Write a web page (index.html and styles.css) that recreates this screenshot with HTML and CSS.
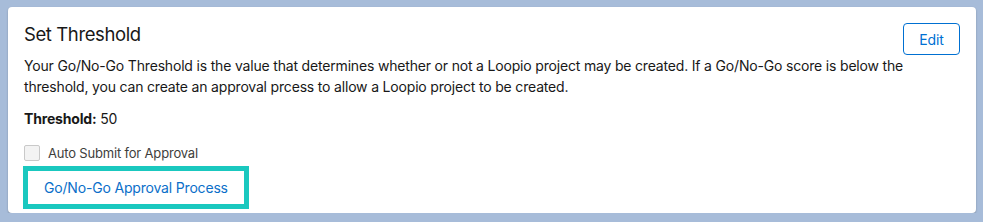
FILE: index.html
```html
<!DOCTYPE html>
<html lang="en">
<head>
  <meta charset="UTF-8">
  <title>Set Threshold</title>
  <link rel="stylesheet" href="styles.css">
</head>
<body>
  <section class="card">
    <div class="card-head">
      <h2>Set Threshold</h2>
      <button class="btn-edit">Edit</button>
    </div>
    <p class="desc">Your Go/No-Go Threshold is the value that determines whether or not a Loopio project may be created. If a Go/No-Go score is below the threshold, you can create an approval prcess to allow a Loopio project to be created.</p>
    <p class="threshold"><b>Threshold:</b> 50</p>
    <label class="check">
      <span class="box"></span>
      Auto Submit for Approval
    </label>
    <div class="highlight">
      <a href="#">Go/No-Go Approval Process</a>
    </div>
  </section>
</body>
</html>
```

FILE: styles.css
```css
html, body {
  margin: 0;
  padding: 0;
  background: #a7bcd9;
  font-family: Inter, 'Liberation Sans', sans-serif;
  color: #181818;
  letter-spacing: -0.18px;
}

.card {
  margin: 7px 7px 0 8px;
  height: 206px;
  box-sizing: border-box;
  background: #fff;
  border-radius: 4px;
  box-shadow: 0 1px 2px rgba(0, 0, 0, 0.25);
  padding: 14px 16px 0 16px;
}

.card-head {
  display: flex;
  justify-content: space-between;
  align-items: flex-start;
  height: 34px;
}

.card-head h2 {
  margin: 1px 0 0 0;
  font-size: 18.5px;
  font-weight: 400;
  line-height: 24px;
  letter-spacing: -0.4px;
}

.btn-edit {
  margin-top: 2px;
  width: 57px;
  height: 32px;
  background: #fff;
  border: 1px solid #0070d2;
  border-radius: 4px;
  color: #0070d2;
  font-family: inherit;
  font-size: 14px;
  letter-spacing: -0.1px;
}

.desc {
  margin: 0;
  font-size: 14px;
  line-height: 21px;
}

.threshold {
  margin: 12px 0 0 0;
  font-size: 14px;
  line-height: 20px;
}

.check {
  display: flex;
  align-items: center;
  gap: 8px;
  margin-top: 16px;
  font-size: 13px;
  color: #3e3e3c;
}

.check .box {
  width: 14px;
  height: 14px;
  border: 1px solid #c9c9c9;
  border-radius: 2px;
  background: #f3f3f3;
}

.highlight {
  margin: 5px 0 0 -1px;
  width: 226px;
  height: 43px;
  box-sizing: border-box;
  border: 5px solid #1ac8bf;
  display: flex;
  align-items: center;
  padding-left: 16px;
}

.highlight a {
  color: #0b6fc9;
  text-decoration: none;
  font-size: 14px;
}
```
